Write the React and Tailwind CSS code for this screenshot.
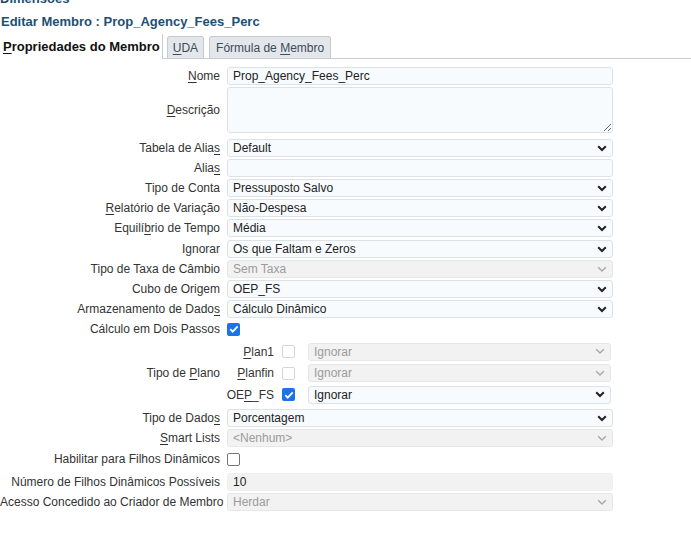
const font = { fontFamily: '"Liberation Sans", Arial, sans-serif' };

function Chevron({ disabled }) {
  return (
    <svg width="10" height="7" viewBox="0 0 10 7" className="shrink-0">
      <path
        d="M1.2 1.2L5 5l3.8-3.8"
        fill="none"
        stroke={disabled ? "#a8a8a8" : "#222"}
        strokeWidth={disabled ? 1.4 : 2}
      />
    </svg>
  );
}

// label text with one underlined access key
function Key({ text, at }) {
  if (at === undefined) return <span>{text}</span>;
  return (
    <span className="whitespace-pre">
      {text.slice(0, at)}
      <span className="underline underline-offset-2">{text[at]}</span>
      {text.slice(at + 1)}
    </span>
  );
}

function Select({ value, disabled, className = "w-[386px]" }) {
  return (
    <div
      className={`h-[18px] ${className} flex items-center justify-between px-[5px] rounded-[3px] border ${
        disabled
          ? "bg-[#f2f2f2] border-[#e6e6e6] text-[#9b9b9b]"
          : "bg-[#f8fbfd] border-[#dde2e7] text-[#222]"
      }`}
    >
      <span>{value}</span>
      <Chevron disabled={disabled} />
    </div>
  );
}

function Input({ value, disabled }) {
  return (
    <div
      className={`h-[18px] w-[386px] flex items-center pl-[5px] rounded-[3px] border text-[#222] ${
        disabled ? "bg-[#f2f2f2] border-[#efefef]" : "bg-[#f8fbfd] border-[#dde2e7]"
      }`}
    >
      {value}
    </div>
  );
}

function Check({ checked }) {
  if (checked)
    return (
      <div className="w-[13px] h-[13px] rounded-[2px] bg-[#1a73e8] flex items-center justify-center">
        <svg width="10" height="8" viewBox="0 0 10 8">
          <path d="M1.3 4.2l2.4 2.4 5-5.2" fill="none" stroke="#fff" strokeWidth="1.8" />
        </svg>
      </div>
    );
  return <div className="w-[13px] h-[13px] rounded-[2px] border border-[#767676] bg-white" />;
}

function Row({ label, k, children, className = "" }) {
  return (
    <div className={`flex items-center ${className}`}>
      <div className="w-[220px] text-right text-[#333] whitespace-nowrap">
        <Key text={label} at={k} />
      </div>
      <div className="ml-[7px] flex items-center">{children}</div>
    </div>
  );
}

const plans = [
  { name: "Plan1", k: 0, checked: false },
  { name: "Planfin", k: 0, checked: false },
  { name: "OEP_FS", k: 2, checked: true },
];

export default function App() {
  return (
    <div className="w-[691px] h-[547px] bg-white overflow-hidden text-[12px]" style={font}>
      <div className="-mt-[9px] text-[13px] font-bold text-[#1d4f73] leading-[16px]">Dimensões</div>
      <div className="mt-[7px] pl-[1px] text-[13px] font-bold text-[#1d4f73] leading-[16px]">
        Editar Membro : Prop_Agency_Fees_Perc
      </div>

      {/* tabs */}
      <div className="mt-[5px] flex items-end h-[24px] border-b border-[#c9cdd2]">
        <div className="h-[25px] -mb-px pl-[3px] pr-[2px] flex items-center bg-white border-r border-[#c9cdd2] text-[13px] font-bold text-[#111]">
          <Key text="Propriedades do Membro" at={0} />
        </div>
        <div className="ml-[4px] h-[22px] px-[5px] flex items-center bg-[#e3e7eb] border border-b-0 border-[#c6cbd1] rounded-t-[3px] text-[#3d4b59]">
          <Key text="UDA" at={0} />
        </div>
        <div className="ml-[5px] h-[22px] px-[6px] flex items-center bg-[#e3e7eb] border border-b-0 border-[#c6cbd1] rounded-t-[3px] text-[#3d4b59]">
          <Key text="Fórmula de Membro" at={11} />
        </div>
      </div>

      {/* form */}
      <div className="pt-[8px] flex flex-col gap-[2px] leading-[16px]">
        <Row label="Nome" k={0}>
          <Input value="Prop_Agency_Fees_Perc" />
        </Row>
        <Row label="Descrição" k={0} className="mb-[4px]">
          <textarea
            className="h-[46px] w-[386px] rounded-[3px] border border-[#dde2e7] bg-[#f8fbfd] block"
            defaultValue=""
          />
        </Row>
        <Row label="Tabela de Alias" k={14}>
          <Select value="Default" />
        </Row>
        <Row label="Alias" k={4}>
          <Input value="" />
        </Row>
        <Row label="Tipo de Conta">
          <Select value="Pressuposto Salvo" />
        </Row>
        <Row label="Relatório de Variação" k={0}>
          <Select value="Não-Despesa" />
        </Row>
        <Row label="Equilíbrio de Tempo" k={6}>
          <Select value="Média" />
        </Row>
        <Row label="Ignorar" className="mt-[1px]">
          <Select value="Os que Faltam e Zeros" />
        </Row>
        <Row label="Tipo de Taxa de Câmbio">
          <Select value="Sem Taxa" disabled />
        </Row>
        <Row label="Cubo de Origem">
          <Select value="OEP_FS" />
        </Row>
        <Row label="Armazenamento de Dados" k={21}>
          <Select value="Cálculo Dinâmico" />
        </Row>
        <Row label="Cálculo em Dois Passos" className="h-[18px]">
          <Check checked />
        </Row>

        <Row label="Tipo de Plano" k={8} className="mt-[2px]">
          <div className="-ml-[7px] flex flex-col gap-[2.5px]">
            {plans.map((p) => (
              <div key={p.name} className="flex items-center h-[19px]">
                <div className="w-[54px] text-right text-[#333]">
                  <Key text={p.name} at={p.k} />
                </div>
                <div className="ml-[8px] w-[13px] flex justify-center">
                  {p.checked ? (
                    <Check checked />
                  ) : (
                    <div className="w-[13px] h-[13px] rounded-[2px] border border-[#d6d6d6] bg-white" />
                  )}
                </div>
                <div className="ml-[13px]">
                  <Select value="Ignorar" disabled={!p.checked} className="w-[303px]" />
                </div>
              </div>
            ))}
          </div>
        </Row>

        <Row label="Tipo de Dados" k={12} className="mt-[3px]">
          <Select value="Porcentagem" />
        </Row>
        <Row label="Smart Lists" k={0}>
          <Select value="<Nenhum>" disabled />
        </Row>
        <Row label="Habilitar para Filhos Dinâmicos" className="h-[20px]">
          <Check />
        </Row>
        <Row label="Número de Filhos Dinâmicos Possíveis" className="mt-[2px]">
          <Input value="10" disabled />
        </Row>
        <Row label="Acesso Concedido ao Criador de Membro">
          <Select value="Herdar" disabled />
        </Row>
      </div>
    </div>
  );
}
